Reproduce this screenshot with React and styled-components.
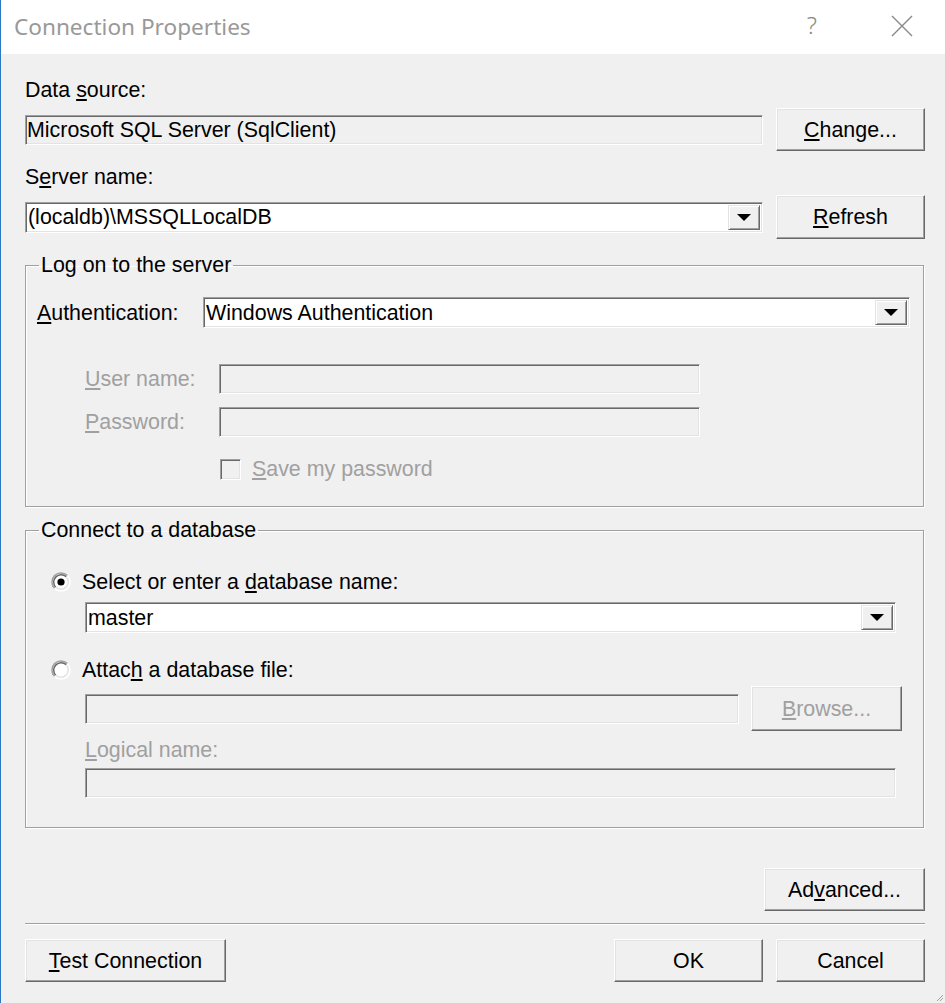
import styled, { createGlobalStyle } from 'styled-components';

const GlobalStyle = createGlobalStyle`
  html, body {
    margin: 0;
    padding: 0;
    background: #f0f0f0;
  }
  * {
    box-sizing: border-box;
  }
`;

const Window = styled.div`
  position: relative;
  width: 945px;
  height: 1003px;
  background: #f0f0f0;
  border-left: 1px solid #2b79c4;
  font-family: "Liberation Sans", Arial, sans-serif;
  font-size: 21.4px;
  color: #000;
  overflow: hidden;
`;

const TitleBar = styled.div`
  height: 54px;
  background: #fff;
  display: flex;
  align-items: center;
  padding-left: 13px;
`;

const Title = styled.div`
  flex: 1;
  font-family: "Noto Sans", "Open Sans", sans-serif;
  font-size: 22.6px;
  color: #999;
  margin-top: -1px;
`;

const HelpGlyph = styled.div`
  font-family: "Noto Sans", sans-serif;
  font-weight: 300;
  font-size: 24px;
  color: #888;
  margin-right: 74px;
  margin-top: -6px;
`;

const CloseGlyph = styled.svg`
  width: 22px;
  height: 22px;
  margin-right: 32px;
  margin-top: -2px;
`;

const Body = styled.div`
  padding: 0 20px 0 24px;
  display: flex;
  flex-direction: column;
`;

const FieldLabel = styled.div`
  line-height: 24px;
  height: 24px;
  margin-top: ${(p) => p.$top || 0}px;
  margin-left: ${(p) => p.$indent || 0}px;
  color: ${(p) => (p.$disabled ? '#a0a0a0' : '#000')};
  white-space: nowrap;
`;

const Row = styled.div`
  display: flex;
  align-items: center;
  gap: ${(p) => p.$gap ?? 13}px;
  margin-top: ${(p) => p.$top || 0}px;
  margin-left: ${(p) => p.$indent || 0}px;
  margin-right: ${(p) => p.$right || 0}px;
`;

const sunken = `
  border: 1px solid;
  border-color: #a0a0a0 #fff #fff #a0a0a0;
  box-shadow: inset 1px 1px 0 #696969, inset -1px -1px 0 #e3e3e3;
`;

const TextBox = styled.div`
  ${sunken}
  flex: ${(p) => (p.$width ? 'none' : 1)};
  width: ${(p) => (p.$width ? `${p.$width}px` : 'auto')};
  height: ${(p) => p.$height || 30}px;
  background: #f0f0f0;
  display: flex;
  align-items: center;
  padding: 2px 0 0 1px;
  white-space: nowrap;
  overflow: hidden;
`;

const Combo = styled.div`
  ${sunken}
  flex: 1;
  height: 31px;
  background: #fff;
  display: flex;
  align-items: stretch;
  padding: 2px;
`;

const ComboText = styled.div`
  flex: 1;
  display: flex;
  align-items: center;
  padding-top: 1px;
  white-space: nowrap;
`;

const ComboArrow = styled.div`
  width: 32px;
  background: #f0f0f0;
  border: 1px solid;
  border-color: #e3e3e3 #696969 #696969 #e3e3e3;
  box-shadow: inset 1px 1px 0 #fff, inset -1px -1px 0 #a0a0a0;
  display: flex;
  align-items: center;
  justify-content: center;
`;

const Button = styled.div`
  flex: none;
  width: ${(p) => p.$width || 149}px;
  height: ${(p) => p.$height || 43}px;
  background: #f0f0f0;
  border: 1px solid;
  border-color: #fff #696969 #696969 #fff;
  box-shadow: inset -1px -1px 0 #a0a0a0, inset 1px 1px 0 #e3e3e3;
  display: flex;
  align-items: center;
  justify-content: center;
  color: ${(p) => (p.$disabled ? '#a0a0a0' : '#000')};
  white-space: nowrap;
  padding-top: 1px;
`;

const Group = styled.fieldset`
  margin: ${(p) => p.$top || 0}px 1px 0 0;
  padding: ${(p) => p.$padTop}px ${(p) => p.$padRight}px ${(p) => p.$padBottom}px 11px;
  border: 1px solid #a0a0a0;
  box-shadow: 1px 1px 0 #fff, inset 1px 1px 0 #fff;
  min-width: 0;
`;

const Legend = styled.legend`
  padding: 0 2px;
  margin-left: 2px;
  line-height: 24px;
  height: 24px;
`;

const InlineLabel = styled.div`
  flex: none;
  width: ${(p) => p.$width}px;
  line-height: 24px;
  color: ${(p) => (p.$disabled ? '#a0a0a0' : '#000')};
  white-space: nowrap;
`;

const CheckBox = styled.div`
  width: 21px;
  height: 21px;
  border: 1px solid;
  border-color: #a0a0a0 #fff #fff #a0a0a0;
  box-shadow: inset 1px 1px 0 #696969, inset -1px -1px 0 #e3e3e3;
  background: #f0f0f0;
`;

const OptionText = styled.div`
  line-height: 24px;
  color: ${(p) => (p.$disabled ? '#a0a0a0' : '#000')};
  white-space: nowrap;
`;

const Separator = styled.div`
  height: 2px;
  margin-top: 12px;
  border-top: 1px solid #a0a0a0;
  border-bottom: 1px solid #fff;
`;

const Footer = styled.div`
  display: flex;
  align-items: center;
  gap: 13px;
  margin-top: 14px;
`;

const Spacer = styled.div`
  flex: 1;
`;

const Grip = styled.svg`
  position: absolute;
  right: 1px;
  bottom: 1px;
  width: 8px;
  height: 8px;
`;

function Arrow() {
  return (
    <svg width="14" height="7" viewBox="0 0 14 7">
      <polygon points="0,0 14,0 7,7" fill="#000" />
    </svg>
  );
}

function Radio({ checked }) {
  return (
    <svg width="20" height="20" viewBox="0 0 20 20" style={{ flex: 'none' }}>
      <circle cx="10" cy="10" r="9" fill="#fff" />
      <path d="M3.6 16.4 A9 9 0 0 1 16.4 3.6" fill="none" stroke="#a0a0a0" strokeWidth="1.5" />
      <path d="M16.4 3.6 A9 9 0 0 1 3.6 16.4" fill="none" stroke="#fff" strokeWidth="1.5" />
      <path d="M4.7 15.3 A7.5 7.5 0 0 1 15.3 4.7" fill="none" stroke="#696969" strokeWidth="1.5" />
      <path d="M15.3 4.7 A7.5 7.5 0 0 1 4.7 15.3" fill="none" stroke="#e3e3e3" strokeWidth="1.5" />
      {checked && <circle cx="10" cy="10" r="3.6" fill="#000" />}
    </svg>
  );
}

export default function App() {
  return (
    <>
      <GlobalStyle />
      <Window>
        <TitleBar>
          <Title>Connection Properties</Title>
          <HelpGlyph>?</HelpGlyph>
          <CloseGlyph viewBox="0 0 22 22">
            <path d="M1 1 L21 21 M21 1 L1 21" stroke="#888" strokeWidth="1.4" />
          </CloseGlyph>
        </TitleBar>

        <Body>
          <FieldLabel $top={24}>Data <u>s</u>ource:</FieldLabel>
          <Row $top={6}>
            <TextBox>Microsoft SQL Server (SqlClient)</TextBox>
            <Button><span><u>C</u>hange...</span></Button>
          </Row>

          <FieldLabel $top={14}>S<u>e</u>rver name:</FieldLabel>
          <Row $top={6}>
            <Combo>
              <ComboText>(localdb)\MSSQLLocalDB</ComboText>
              <ComboArrow><Arrow /></ComboArrow>
            </Combo>
            <Button $height={44}><span><u>R</u>efresh</span></Button>
          </Row>

          <Group $top={14} $padTop={20} $padRight={13} $padBottom={25}>
            <Legend>Log on to the server</Legend>
            <Row $gap={0}>
              <InlineLabel $width={166}><u>A</u>uthentication:</InlineLabel>
              <Combo>
                <ComboText>Windows Authentication</ComboText>
                <ComboArrow><Arrow /></ComboArrow>
              </Combo>
            </Row>
            <Row $gap={0} $indent={48} $top={36}>
              <InlineLabel $width={134} $disabled><u>U</u>ser name:</InlineLabel>
              <TextBox $width={481} />
            </Row>
            <Row $gap={0} $indent={48} $top={13}>
              <InlineLabel $width={134} $disabled><u>P</u>assword:</InlineLabel>
              <TextBox $width={481} />
            </Row>
            <Row $gap={11} $indent={183} $top={20}>
              <CheckBox />
              <OptionText $disabled><u>S</u>ave my password</OptionText>
            </Row>
          </Group>

          <Group $top={11} $padTop={28} $padRight={21} $padBottom={29}>
            <Legend>Connect to a database</Legend>
            <Row $gap={11} $indent={14}>
              <Radio checked />
              <OptionText>Select or enter a <u>d</u>atabase name:</OptionText>
            </Row>
            <Row $indent={48} $right={6} $top={8}>
              <Combo>
                <ComboText>master</ComboText>
                <ComboArrow><Arrow /></ComboArrow>
              </Combo>
            </Row>
            <Row $gap={11} $indent={14} $top={25}>
              <Radio />
              <OptionText>Attac<u>h</u> a database file:</OptionText>
            </Row>
            <Row $gap={12} $indent={48} $top={4}>
              <TextBox />
              <Button $width={151} $height={45} $disabled><span><u>B</u>rowse...</span></Button>
            </Row>
            <FieldLabel $disabled $top={7} $indent={48}><u>L</u>ogical name:</FieldLabel>
            <Row $indent={48} $right={6} $top={6}>
              <TextBox $height={30} />
            </Row>
          </Group>

          <Row $top={40}>
            <Spacer />
            <Button $width={161}><span>Ad<u>v</u>anced...</span></Button>
          </Row>

          <Separator />

          <Footer>
            <Button $width={201}><span><u>T</u>est Connection</span></Button>
            <Spacer />
            <Button>OK</Button>
            <Button>Cancel</Button>
          </Footer>
        </Body>

        <Grip viewBox="0 0 8 8">
          <path d="M7 1 L1 7 M7 4 L4 7" stroke="#a0a0a0" strokeWidth="1" />
        </Grip>
      </Window>
    </>
  );
}
